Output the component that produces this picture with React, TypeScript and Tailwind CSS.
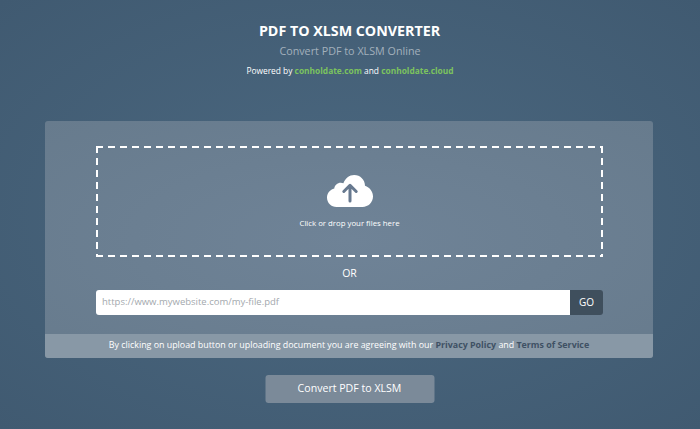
import React from "react";

export default function App() {
  return (
    <div className="h-[429px] w-[700px] overflow-hidden bg-[radial-gradient(ellipse_at_center,#4b6880_0%,#405a71_100%)] font-['Open_Sans',sans-serif] text-white">
      <div className="flex flex-col items-center pt-[21px]">
        <h1 className="-translate-x-[0.5px] text-[14.25px] font-bold leading-[20px]">PDF TO XLSM CONVERTER</h1>
        <p className="mt-[2px] text-[10.75px] leading-[16px] text-[#a3b0bc]">Convert PDF to XLSM Online</p>
        <p className="mt-[4px] text-[8.4px] leading-[16px]">
          Powered by <a className="font-bold text-[#7cc35e]">conholdate.com</a> and{" "}
          <a className="font-bold text-[#7cc35e]">conholdate.cloud</a>
        </p>
      </div>

      <div className="mx-[45px] mt-[42px] w-[608px] rounded-[3px] bg-[radial-gradient(ellipse_at_center,#6f8397_0%,#677b8d_100%)]">
        <div className="pl-[51px] pr-[50px] pt-[25px]">
          <div className="flex h-[111px] flex-col items-center bg-[linear-gradient(to_right,#fff_7px,transparent_7px),linear-gradient(to_right,#fff_7px,transparent_7px),linear-gradient(to_bottom,#fff_7px,transparent_7px),linear-gradient(to_bottom,#fff_7px,transparent_7px)] bg-[length:12px_2px,12px_2px,2px_12px,2px_12px] bg-[position:0_0,0_100%,0_0,100%_0] [background-repeat:repeat-x,repeat-x,repeat-y,repeat-y] pt-[29px]">
            <svg width="46" height="32" viewBox="0 0 46 32" className="block">
              <path
                fill="#ffffff"
                d="M9.5 32C4.200 32 0 27.800 0 22.700 0 18.300 3.100 14.600 7.300 13.600 7.600 10.300 10.400 7.800 13.800 7.800c.9 0 1.800.2 2.600.5C18.200 3.400 22.300 0 27.200 0 33.300 0 38 4.800 38 10.800 42.800 12.500 46 16.700 46 21.600 46 27.400 41.300 32 35.500 32Z"
              />
              <path
                d="M23 26V10.500M16.800 16.500 23 10.300l6.200 6.200"
                fill="none"
                stroke="#67798f"
                strokeWidth="3"
                strokeLinecap="round"
                strokeLinejoin="round"
              />
            </svg>
            <p className="mt-[9px] text-[7.8px] leading-[14px]">Click or drop your files here</p>
          </div>
          <p className="mt-[8px] text-center text-[10.5px] leading-[16px]">OR</p>
          <div className="mt-[9px] flex h-[25px]">
            <div className="flex flex-1 items-center rounded-l-[3px] bg-white px-[6px] text-[9.5px] text-[#a3a8ad]">
              https://www.mywebsite.com/my-file.pdf
            </div>
            <button className="w-[33px] rounded-r-[3px] bg-[#3f4f5d] text-[10px] text-white">GO</button>
          </div>
        </div>
        <div className="mt-[19px] flex h-[24px] items-center justify-center rounded-b-[3px] bg-[#8898a6] text-[8.87px]">
          <span>
            By clicking on upload button or uploading document you are agreeing with our{" "}
            <a className="font-bold text-[#3f5164]">Privacy Policy</a> and{" "}
            <a className="font-bold text-[#3f5164]">Terms of Service</a>
          </span>
        </div>
      </div>

      <div className="mt-[17px] flex justify-center">
        <button className="h-[28px] w-[169px] -translate-x-[0.5px] rounded-[3px] bg-[#7b8a99] text-[10.6px] text-white">
          Convert PDF to XLSM
        </button>
      </div>
    </div>
  );
}
